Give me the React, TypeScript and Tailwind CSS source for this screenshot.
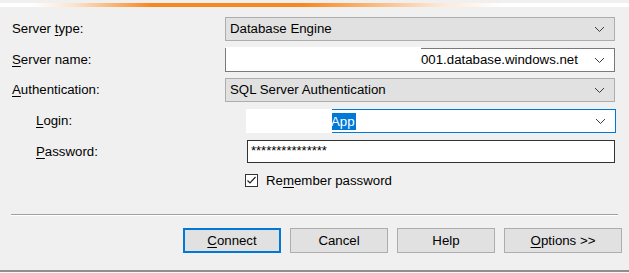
import React from 'react';

const font = { fontFamily: '"Liberation Sans", Arial, sans-serif' };

function Chevron() {
  return (
    <svg width="11" height="7" viewBox="0 0 11 7" className="shrink-0">
      <polyline points="1,1 5.5,5.5 10,1" fill="none" stroke="#3c3c3c" strokeWidth="1" />
    </svg>
  );
}

function Key({ children }: { children: React.ReactNode }) {
  return <span className="underline underline-offset-2 decoration-1">{children}</span>;
}

export default function App() {
  return (
    <div className="relative w-[629px] h-[273px] bg-[#f0f0f0] text-[13.25px] text-black overflow-hidden" style={font}>
      {/* top accent */}
      <div className="h-[3px]" />
      <div className="h-[4px] bg-[linear-gradient(to_right,#ffffff_0%,#ffffff_5%,#fbe2cc_12%,#f7881f_24%,#f7881f_48%,#fde8d6_70%,#ffffff_80%,#ffffff_100%)]" />

      <div className="flex flex-col">
        {/* Server type */}
        <div className="flex items-center h-[24px] mt-[10px]">
          <div className="w-[225px] pl-[12px]">Server <Key>t</Key>ype:</div>
          <div className="flex items-center justify-between w-[390px] h-full bg-[#e1e1e1] border border-[#adadad] pl-[4px] pr-[9px]">
            <span>Database Engine</span>
            <Chevron />
          </div>
        </div>

        {/* Server name */}
        <div className="flex items-center h-[24px] mt-[7px]">
          <div className="w-[225px] pl-[12px]"><Key>S</Key>erver name:</div>
          <div className="relative flex items-center justify-between w-[390px] h-full bg-white border border-[#7a7a7a] pl-[195px] pr-[9px]">
            <span>001.database.windows.net</span>
            <Chevron />
            <div className="absolute left-[0px] top-[-2px] w-[195px] h-[23px] bg-white" />
          </div>
        </div>

        {/* Authentication */}
        <div className="flex items-center h-[24px] mt-[6px]">
          <div className="w-[225px] pl-[12px]"><Key>A</Key>uthentication:</div>
          <div className="flex items-center justify-between w-[390px] h-full bg-[#e1e1e1] border border-[#adadad] pl-[4px] pr-[9px]">
            <span>SQL Server Authentication</span>
            <Chevron />
          </div>
        </div>

        {/* Login */}
        <div className="flex items-center h-[24px] mt-[7px]">
          <div className="w-[246px] pl-[36px]"><Key>L</Key>ogin:</div>
          <div className="relative flex items-center justify-between w-[370px] h-full bg-white border border-[#0078d7] pl-[84px] pr-[9px]">
            <span className="bg-[#0078d7] text-white leading-[17px] pr-[1px]">App</span>
            <Chevron />
            <div className="absolute left-[-1px] top-[-1px] w-[86px] h-[24px] bg-white" />
          </div>
        </div>

        {/* Password */}
        <div className="flex items-center h-[23px] mt-[7px]">
          <div className="w-[247px] pl-[36px]"><Key>P</Key>assword:</div>
          <div className="flex items-start w-[368px] h-full bg-white border border-[#333333] pl-[3px] pt-[3px] text-[13px] leading-[13px]">
            ***************
          </div>
        </div>

        {/* Remember */}
        <div className="flex items-center h-[15px] mt-[10px] pl-[245px]">
          <div className="w-[13px] h-[13px] border border-[#333333] bg-white flex items-center justify-center">
            <svg width="11" height="11" viewBox="0 0 11 11">
              <polyline points="1.5,5.5 4,8 9.5,2" fill="none" stroke="#222" strokeWidth="1.2" />
            </svg>
          </div>
          <span className="ml-[8px]">Re<Key>m</Key>ember password</span>
        </div>

        {/* separator */}
        <div className="ml-[11px] w-[607px] h-[2px] mt-[26px] border-t border-[#a0a0a0] border-b border-b-white" />

        {/* buttons */}
        <div className="flex h-[25px] mt-[12px] pl-[183px] gap-[9px]">
          <button className="w-[98px] h-full bg-[#e1e1e1] border-2 border-[#0078d7]"><Key>C</Key>onnect</button>
          <button className="w-[98px] h-full bg-[#e1e1e1] border border-[#adadad]">Cancel</button>
          <button className="w-[98px] h-full bg-[#e1e1e1] border border-[#adadad]">Help</button>
          <button className="w-[118px] h-full bg-[#e1e1e1] border border-[#adadad]"><Key>O</Key>ptions &gt;&gt;</button>
        </div>

        {/* bottom edge */}
        <div className="mt-[17px] h-[2px] bg-[#8f8f8f]" />
        <div className="h-[3px] bg-[#f8f8f8]" />
      </div>
    </div>
  );
}
